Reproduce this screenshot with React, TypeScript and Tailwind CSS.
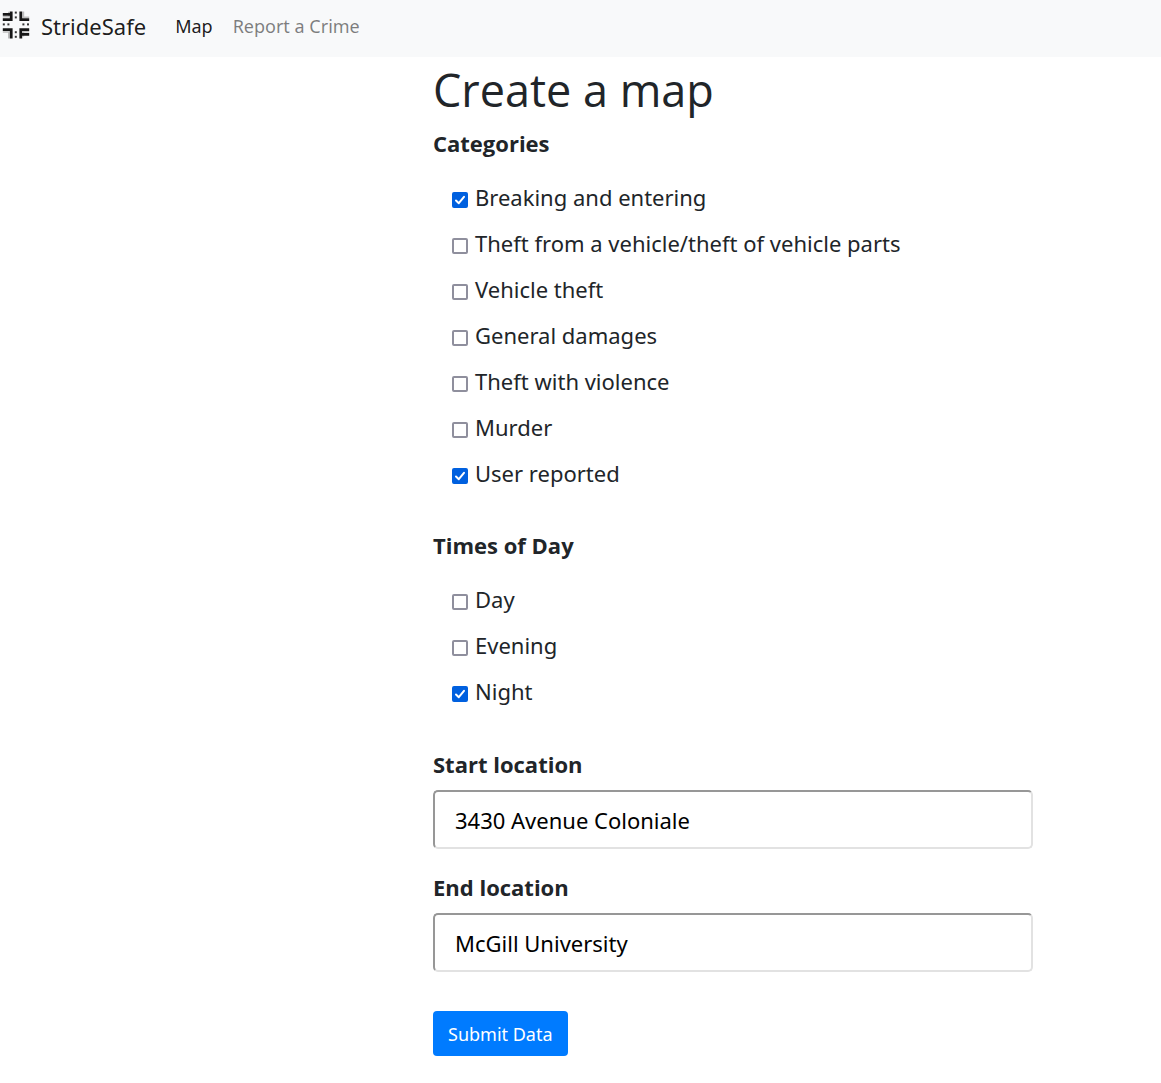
import { useState, type FormEvent } from "react";

const categories = [
    "Breaking and entering",
    "Theft from a vehicle/theft of vehicle parts",
    "Vehicle theft",
    "General damages",
    "Theft with violence",
    "Murder",
    "User reported",
];

const times = ["Day", "Evening", "Night"];

function Logo() {
    return (
        <svg viewBox="0 0 28 28" className="size-7 mb-1" aria-hidden="true">
            <g fill="none" stroke="#bdbdbd" strokeWidth="1.6">
                <path d="M0.8 5.8H6.8V0.8" />
                <path d="M21.4 0.6V6.2H27.2" />
                <path d="M0.8 21H6.8V27.4" />
                <path d="M21.4 25.6V20.8H27.2" />
            </g>
            <g fill="none" stroke="#161616" strokeWidth="2.8">
                <path d="M0.8 3.4H8.5M0.8 8.6H9.2V0.6" />
                <path d="M18.8 0.6V8.6H27.2" />
                <path d="M0.8 18.6H9.2V27.4" />
                <path d="M18.8 27.4V18.6H27.2M18.8 23.4H27.2" />
            </g>
            <g fill="#333">
                <rect x="12.8" y="0.6" width="2" height="2" />
                <rect x="12.8" y="5.4" width="2" height="2" />
                <rect x="12.8" y="20.2" width="2" height="2" />
                <rect x="12.8" y="24.8" width="2" height="2" />
                <rect x="0.8" y="12.4" width="2" height="2" />
                <rect x="5.4" y="12.4" width="2" height="2" />
                <rect x="20.4" y="12.4" width="2" height="2" />
                <rect x="25" y="12.4" width="2" height="2" />
            </g>
        </svg>
    );
}

interface CheckListProps {
    title: string;
    items: string[];
    selected: string[];
    onChange: (selected: string[]) => void;
}

function CheckList({ title, items, selected, onChange }: CheckListProps) {

    function toggle(item: string) {
        if (selected.includes(item)) {
            onChange(selected.filter((s) => s !== item));
        } else {
            onChange([...selected, item]);
        }
    }

    return (
        <fieldset>
            <legend className="font-bold font-['Open_Sans',sans-serif] leading-9">{title}</legend>
            <div className="flex flex-col gap-2.5 pt-[18px] pl-[19px]">
                {items.map((item) => (
                    <label key={item} className="flex items-center gap-[7px]">
                        <span className="relative size-4 mt-1.5">
                            <input
                                type="checkbox"
                                name={title}
                                value={item}
                                checked={selected.includes(item)}
                                onChange={() => toggle(item)}
                                className="peer block appearance-none size-4 rounded-[2px] border-2 border-[#8f8f9d] bg-white checked:border-[#0060df] checked:bg-[#0060df]"
                            />
                            <svg
                                viewBox="0 0 16 16"
                                className="absolute inset-0 size-4 hidden peer-checked:block pointer-events-none"
                                aria-hidden="true"
                            >
                                <path d="M4 8.5L6.8 11.2L12 4.8" fill="none" stroke="white" strokeWidth="2" strokeLinecap="round" strokeLinejoin="round" />
                            </svg>
                        </span>
                        {item}
                    </label>
                ))}
            </div>
        </fieldset>
    );
}

interface LocationFieldProps {
    id: string;
    label: string;
    value: string;
    onChange: (value: string) => void;
}

function LocationField({ id, label, value, onChange }: LocationFieldProps) {
    return (
        <div className="flex flex-col gap-2">
            <label htmlFor={id} className="font-bold font-['Open_Sans',sans-serif] leading-9">{label}</label>
            <input
                type="text"
                id={id}
                name={id}
                value={value}
                onChange={(e) => onChange(e.target.value)}
                className="w-full h-[59px] px-5 rounded-[5px] border-2 border-t-[#979797] border-l-[#979797] border-r-[#e2e2e2] border-b-[#e2e2e2] bg-white text-black"
            />
        </div>
    );
}

function App() {

    const [selectedCategories, setSelectedCategories] = useState<string[]>(["Breaking and entering", "User reported"]);
    const [selectedTimes, setSelectedTimes] = useState<string[]>(["Night"]);
    const [start, setStart] = useState("3430 Avenue Coloniale");
    const [end, setEnd] = useState("McGill University");

    function handleSubmit(e: FormEvent<HTMLFormElement>) {
        e.preventDefault();
    }

    return (
        <div className="min-h-screen bg-white text-[#212529] font-['Noto_Sans',sans-serif]">
            <nav className="flex items-center h-[57px] pl-0.5 pb-1 bg-[#f8f9fa]">
                <a href="#" className="flex items-center gap-[11px] mr-[29px] text-[22px] text-black/90">
                    <Logo />
                    StrideSafe
                </a>
                <div className="flex gap-5 text-[18px]">
                    <a href="#" className="text-black/90">Map</a>
                    <a href="#" className="text-black/50">Report a Crime</a>
                </div>
            </nav>

            <main className="max-w-[600px] ml-auto mr-32 pt-1">
                <h1 className="text-[45px] leading-[58px] font-['Open_Sans',sans-serif]">Create a map</h1>
                <form onSubmit={handleSubmit} className="flex flex-col pt-1.5 text-[22px] leading-9">
                    <CheckList
                        title="Categories"
                        items={categories}
                        selected={selectedCategories}
                        onChange={setSelectedCategories}
                    />
                    <div className="pt-9">
                        <CheckList
                            title="Times of Day"
                            items={times}
                            selected={selectedTimes}
                            onChange={setSelectedTimes}
                        />
                    </div>
                    <div className="flex flex-col gap-5 pt-[37px]">
                        <LocationField id="start" label="Start location" value={start} onChange={setStart} />
                        <LocationField id="end" label="End location" value={end} onChange={setEnd} />
                    </div>
                    <button
                        type="submit"
                        className="self-start h-[45px] mt-[39px] mb-7 px-[15px] rounded-[4px] bg-[#007bff] text-white text-[18px] leading-7"
                    >
                        Submit Data
                    </button>
                </form>
            </main>
        </div>
    );
}

export default App;
